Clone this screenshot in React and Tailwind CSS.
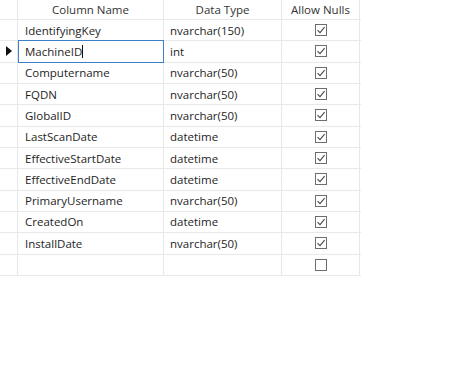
import React from "react";

const rows = [
  ["IdentifyingKey", "nvarchar(150)", true],
  ["MachineID", "int", true],
  ["Computername", "nvarchar(50)", true],
  ["FQDN", "nvarchar(50)", true],
  ["GlobalID", "nvarchar(50)", true],
  ["LastScanDate", "datetime", true],
  ["EffectiveStartDate", "datetime", true],
  ["EffectiveEndDate", "datetime", true],
  ["PrimaryUsername", "nvarchar(50)", true],
  ["CreatedOn", "datetime", true],
  ["InstallDate", "nvarchar(50)", true],
  ["", "", false],
];

function CheckBox({ checked }) {
  return (
    <div className="w-[12px] h-[12px] border border-[#6d6d6d] bg-white flex items-center justify-center">
      {checked && (
        <svg width="10" height="10" viewBox="0 0 10 10">
          <path d="M1.5 5.2 L4 7.6 L8.6 2.2" fill="none" stroke="#4a4a4a" strokeWidth="1.1" />
        </svg>
      )}
    </div>
  );
}

export default function App() {
  return (
    <div
      className="w-[474px] h-[369px] bg-white text-[#1e1e1e] text-[11.5px]"
      style={{ fontFamily: '"Segoe UI", "Open Sans", sans-serif' }}
    >
      <div className="w-[361px]">
        <div className="flex h-[20px] border-b border-[#e8e8e8]">
          <div className="w-[18px] border-r border-[#e8e8e8]" />
          <div className="w-[146px] border-r border-[#e8e8e8] flex items-center justify-center text-[#333]">
            Column Name
          </div>
          <div className="w-[118px] border-r border-[#e8e8e8] flex items-center justify-center text-[#333]">
            Data Type
          </div>
          <div className="w-[78px] border-r border-[#e8e8e8] flex items-center justify-center text-[#333]">
            Allow Nulls
          </div>
        </div>
        {rows.map(([name, type, checked], i) => (
          <div key={i} className="flex h-[21.33px] border-b border-[#e8e8e8]">
            <div className="w-[18px] border-r border-[#e8e8e8] flex items-center justify-center">
              {i === 1 && (
                <svg width="7" height="10" viewBox="0 0 7 10" className="ml-[2px]">
                  <path d="M0 0 L6 5 L0 10 Z" fill="#111" />
                </svg>
              )}
            </div>
            {i === 1 ? (
              <div className="w-[146px] border border-[#3c7fc9] flex items-center pl-[6px] -my-[1px] relative z-10 bg-white">
                <span>{name}</span>
                <span className="w-px h-[13px] bg-[#111]" />
              </div>
            ) : (
              <div className="w-[146px] border-r border-[#e8e8e8] flex items-center pl-[7px]">
                {name}
              </div>
            )}
            <div className="w-[118px] border-r border-[#e8e8e8] flex items-center pl-[6px]">
              {type}
            </div>
            <div className="w-[78px] border-r border-[#e8e8e8] flex items-center justify-center">
              <CheckBox checked={checked} />
            </div>
          </div>
        ))}
      </div>
    </div>
  );
}
